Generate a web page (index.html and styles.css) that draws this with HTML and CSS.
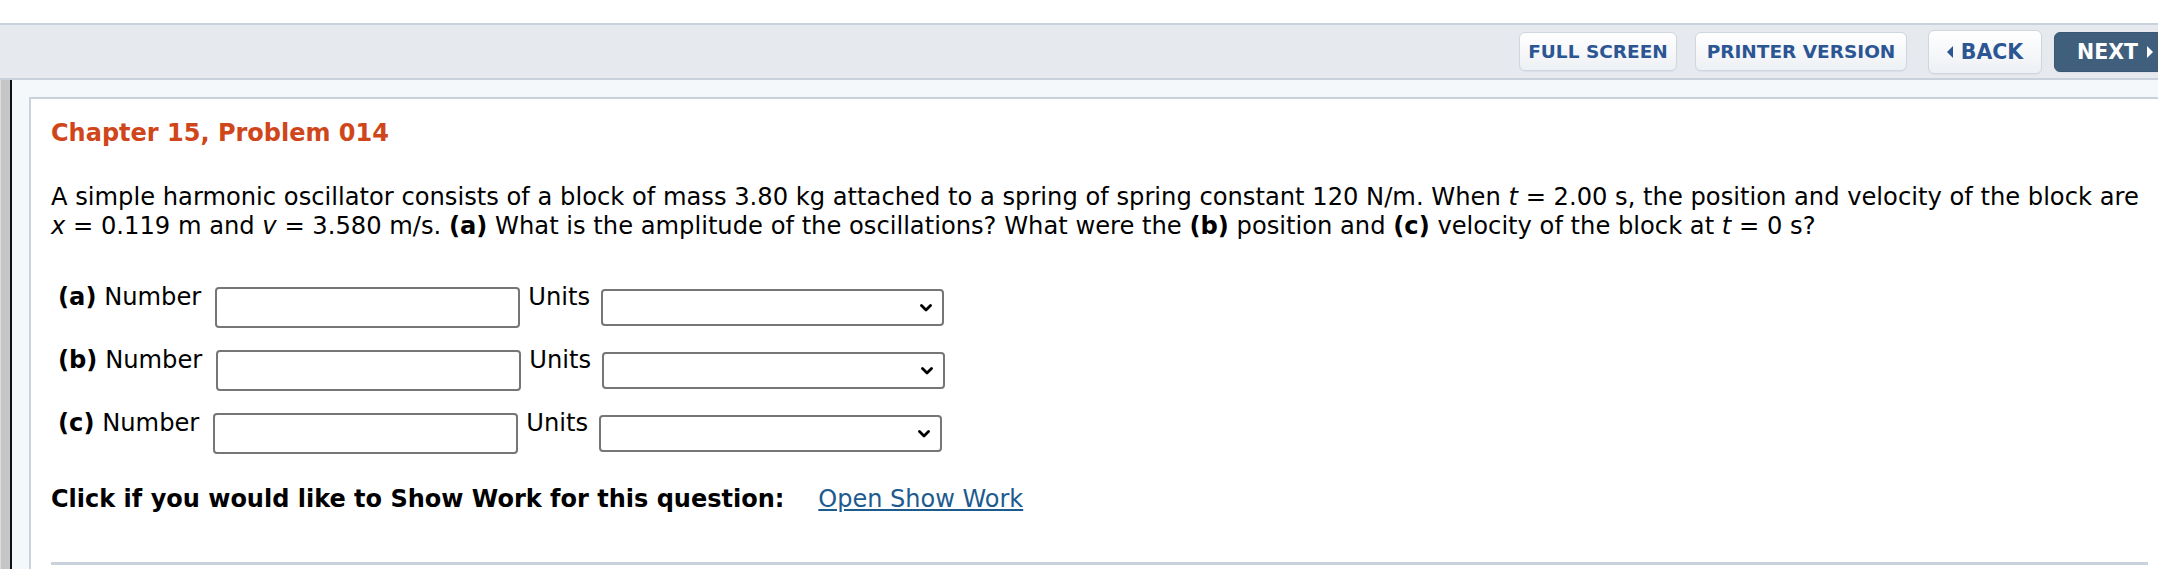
FILE: index.html
```html
<!DOCTYPE html>
<html>
<head>
<meta charset="utf-8">
<title>Chapter 15, Problem 014</title>
<link rel="stylesheet" href="styles.css">
</head>
<body>
<div class="page">
  <div class="topgap"></div>
  <div class="toolbar">
    <button class="btn btn-small btn-fs">FULL SCREEN</button>
    <button class="btn btn-small btn-pv">PRINTER VERSION</button>
    <button class="btn btn-big btn-back"><svg class="tri" width="6" height="12" viewBox="0 0 6 12"><polygon points="6,0 6,12 0,6" fill="#2c5593"/></svg>BACK</button>
    <button class="btn btn-big btn-next">NEXT<svg class="tri tri-r" width="6" height="12" viewBox="0 0 6 12"><polygon points="0,0 6,6 0,12" fill="#ffffff"/></svg></button>
  </div>
  <div class="main">
    <div class="rail-gray"></div>
    <div class="rail-dark"></div>
    <div class="frame">
      <div class="panel">
        <h2 class="title">Chapter 15, Problem 014</h2>
        <p class="question">A simple harmonic oscillator consists of a block of mass 3.80 kg attached to a spring of spring constant 120 N/m. When <i>t</i> = 2.00 s, the position and velocity of the block are <i>x</i> = 0.119 m and <i>v</i> = 3.580 m/s. <b>(a)</b> What is the amplitude of the oscillations? What were the <b>(b)</b> position and <b>(c)</b> velocity of the block at <i>t</i> = 0 s?</p>
        <div class="answers">
          <div class="row">
            <span class="lbl"><b>(a)</b> Number</span>
            <input class="num" type="text">
            <span class="units">Units</span>
            <span class="sel"><select class="unit-select"><option></option></select><svg class="chev" width="12" height="8" viewBox="0 0 12 8"><polyline points="1.5,1.5 6,6 10.5,1.5" fill="none" stroke="#000" stroke-width="2.8" stroke-linecap="round" stroke-linejoin="round"/></svg></span>
          </div>
          <div class="row">
            <span class="lbl"><b>(b)</b> Number</span>
            <input class="num" type="text">
            <span class="units">Units</span>
            <span class="sel"><select class="unit-select"><option></option></select><svg class="chev" width="12" height="8" viewBox="0 0 12 8"><polyline points="1.5,1.5 6,6 10.5,1.5" fill="none" stroke="#000" stroke-width="2.8" stroke-linecap="round" stroke-linejoin="round"/></svg></span>
          </div>
          <div class="row">
            <span class="lbl"><b>(c)</b> Number</span>
            <input class="num" type="text">
            <span class="units">Units</span>
            <span class="sel"><select class="unit-select"><option></option></select><svg class="chev" width="12" height="8" viewBox="0 0 12 8"><polyline points="1.5,1.5 6,6 10.5,1.5" fill="none" stroke="#000" stroke-width="2.8" stroke-linecap="round" stroke-linejoin="round"/></svg></span>
          </div>
        </div>
        <div class="showwork">
          <b class="sw-text">Click if you would like to Show Work for this question:</b>
          <a class="sw-link" href="#">Open Show Work</a>
        </div>
        <div class="sep"></div>
      </div>
    </div>
  </div>
</div>
</body>
</html>
```

FILE: styles.css
```css
html, body {
  margin: 0;
  padding: 0;
  overflow: hidden;
  background: #ffffff;
}

body {
  font-family: "DejaVu Sans", "Verdana", sans-serif;
  color: #000;
}

.page {
  width: 2158px;
  height: 569px;
  display: flex;
  flex-direction: column;
}

.topgap {
  height: 23px;
  flex: none;
}

.toolbar {
  flex: none;
  height: 53px;
  background: #e6eaef;
  border-top: 2px solid #c9d1dc;
  border-bottom: 2px solid #c9d1dc;
  display: flex;
  justify-content: flex-end;
  align-items: center;
}

.btn {
  font-family: inherit;
  font-weight: bold;
  color: #2c5593;
  border: 1px solid #cfd6df;
  border-radius: 6px;
  background: linear-gradient(#ffffff, #edf0f4);
  box-shadow: 0 1px 1px rgba(0, 0, 0, 0.04);
  display: flex;
  align-items: center;
  justify-content: center;
  box-sizing: border-box;
  cursor: pointer;
  white-space: nowrap;
  padding: 0;
}

.btn-small {
  height: 39px;
  font-size: 18.5px;
}

.btn-fs {
  width: 158px;
  margin-right: 18px;
}

.btn-pv {
  width: 212px;
  margin-right: 21px;
}

.btn-big {
  font-size: 20.5px;
}

.btn-back {
  width: 114px;
  height: 44px;
  margin-right: 12px;
}

.btn-next {
  width: 112px;
  height: 40px;
  margin-right: -8px;
  background: #405f7c;
  border-color: #3a5872;
  color: #ffffff;
  justify-content: flex-start;
  padding-left: 22px;
}

.tri {
  margin-right: 8px;
  flex: none;
}

.tri-r {
  margin-right: 0;
  margin-left: 9px;
}

.main {
  flex: 1;
  display: flex;
  min-height: 0;
}

.rail-gray {
  width: 9px;
  border-left: 1px solid #dedede;
  background: #c6c6c6;
  flex: none;
}

.rail-dark {
  width: 2px;
  background: #111;
  flex: none;
}

.frame {
  flex: 1;
  background: #f5f8fb;
  padding: 17px 0 0 17px;
  display: flex;
  min-width: 0;
}

.panel {
  flex: 1;
  background: #ffffff;
  border-top: 2px solid #c9d1dc;
  border-left: 2px solid #c9d1dc;
  padding: 20px 6px 0 20px;
  font-size: 24.2px;
  line-height: 29px;
}

.title {
  margin: 0 0 35px;
  font-size: 24px;
  line-height: 29px;
  font-weight: bold;
  color: #d0461b;
}

.question {
  margin: 0;
}

.answers {
  margin-top: 42px;
  padding-left: 7px;
}

.row {
  display: flex;
  align-items: flex-start;
  height: 45px;
  margin-bottom: 18px;
}

.lbl {
  margin-right: 14px;
  white-space: nowrap;
}

.num {
  width: 305px;
  height: 41px;
  margin-top: 4px;
  border: 2px solid #767676;
  border-radius: 4px;
  box-sizing: border-box;
  background: #fff;
}

.units {
  margin-left: 8px;
  margin-right: 11px;
}

.sel {
  position: relative;
  margin-top: 6px;
  width: 343px;
  height: 37px;
  display: block;
}

.unit-select {
  -webkit-appearance: none;
  appearance: none;
  width: 100%;
  height: 100%;
  border: 2px solid #767676;
  border-radius: 4px;
  background: #fff;
  box-sizing: border-box;
  font-family: inherit;
}

.chev {
  position: absolute;
  right: 12px;
  top: 15px;
  pointer-events: none;
}

.showwork {
  margin-top: 31px;
  display: flex;
  align-items: baseline;
  font-size: 24px;
}

.sw-text {
  font-weight: bold;
}

.sw-link {
  margin-left: 34px;
  color: #1d5b8f;
  text-decoration: underline;
}

.sep {
  margin-top: 48px;
  margin-right: 4px;
  height: 3px;
  background: #c9d1dc;
}
```
